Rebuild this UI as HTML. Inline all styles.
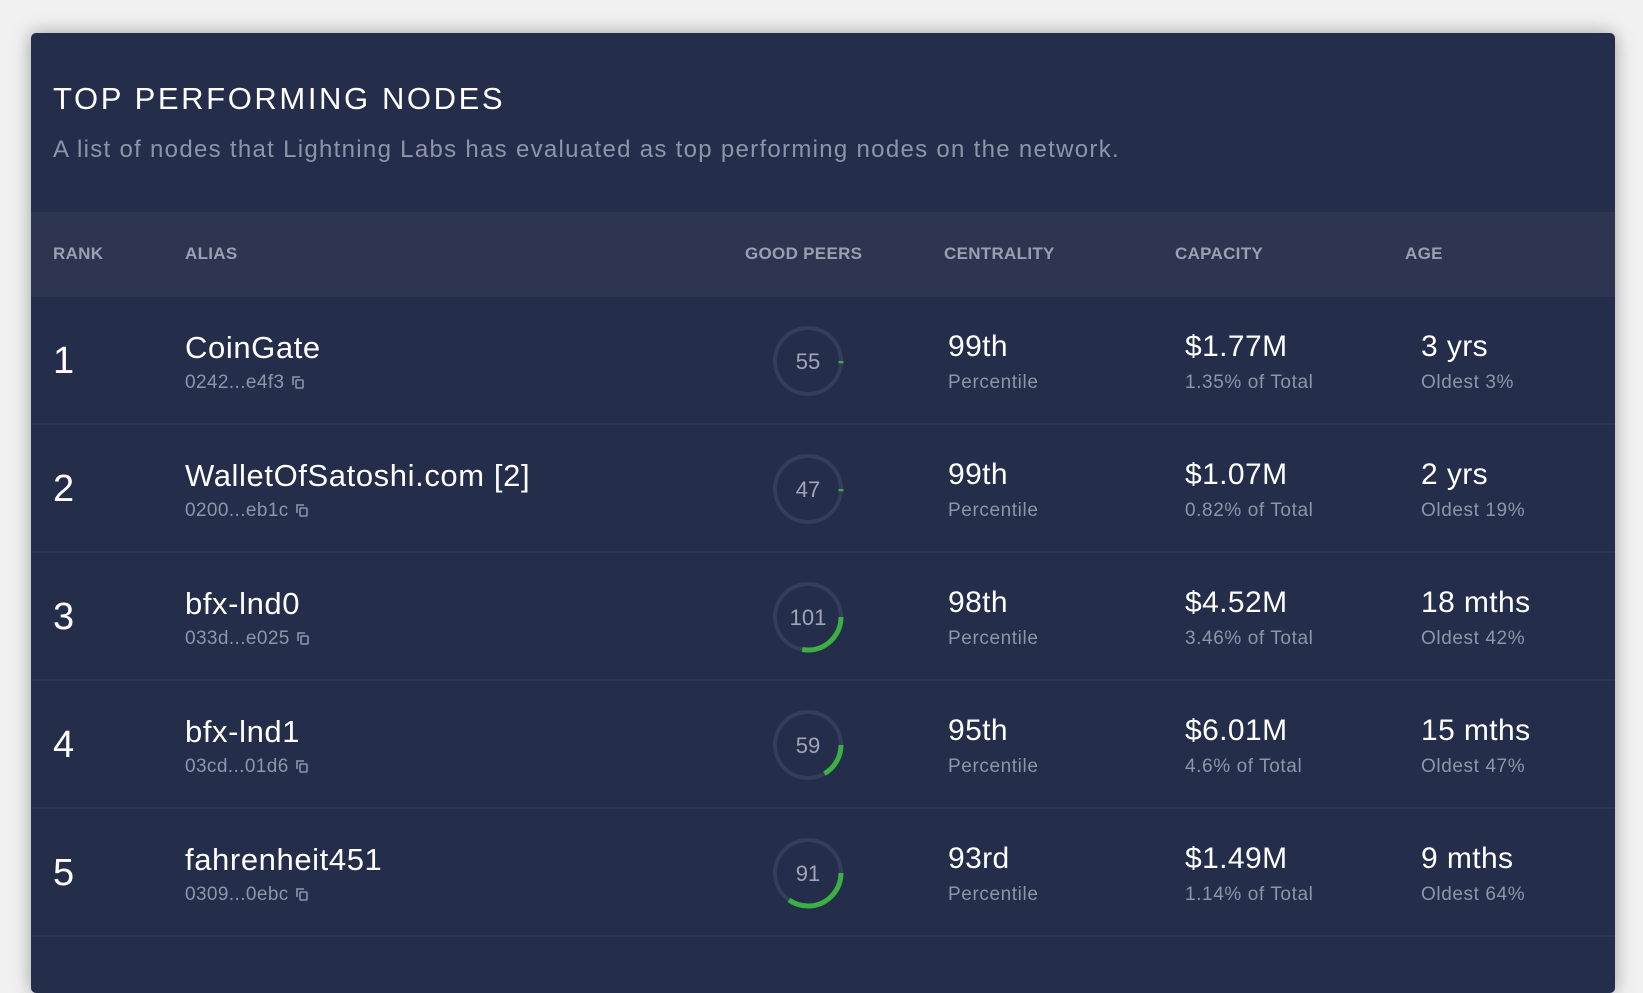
<!DOCTYPE html>
<html><head><meta charset="utf-8"><style>
*{margin:0;padding:0;box-sizing:border-box}
body{width:1643px;height:944px;background:#f1f1f1;overflow:hidden;font-family:"Liberation Sans",sans-serif;position:relative}
.card{position:absolute;left:31px;top:33px;width:1584px;height:960px;background:#242d4a;border-radius:5px;box-shadow:0 0 18px rgba(0,0,0,.35)}
.t{position:absolute;left:22px;top:48px;color:#fff;font-size:31px;letter-spacing:2.6px;white-space:nowrap}
.s{position:absolute;left:22px;top:103px;color:#8e95a9;font-size:24px;white-space:nowrap;letter-spacing:1.3px}
.hd{position:absolute;left:0;top:179px;width:100%;height:85px;background:#2d3551}
.h{position:absolute;top:32px;color:#9aa0b2;font-size:17px;font-weight:bold;white-space:nowrap;letter-spacing:0.3px}
.row{position:absolute;left:0;width:100%;height:128px;border-bottom:2px solid #2c3552}
.rk{position:absolute;left:22px;top:43px;color:#fff;font-size:38px}
.al{position:absolute;left:154px;top:33px;color:#fff;font-size:31px;white-space:nowrap;letter-spacing:0.6px}
.hs{position:absolute;left:154px;top:75px;color:#8e95a9;font-size:19px;white-space:nowrap;letter-spacing:0.4px}
.big{position:absolute;top:33px;color:#fff;font-size:30px;white-space:nowrap;letter-spacing:0.4px}
.sm{position:absolute;top:75px;color:#8e95a9;font-size:19px;white-space:nowrap;letter-spacing:0.6px}
svg.g{position:absolute;left:739px;top:26px}
</style></head><body>
<div class="card">
<div class="t">TOP PERFORMING NODES</div>
<div class="s">A list of nodes that Lightning Labs has evaluated as top performing nodes on the network.</div>
<div class="hd">
<div class="h" style="left:22px">RANK</div>
<div class="h" style="left:154px">ALIAS</div>
<div class="h" style="left:714px">GOOD PEERS</div>
<div class="h" style="left:913px">CENTRALITY</div>
<div class="h" style="left:1144px">CAPACITY</div>
<div class="h" style="left:1374px">AGE</div>
</div>
<div id="rows"></div>
</div>
<script>
var d=[["1","CoinGate","0242...e4f3","55",4,"99th","$1.77M","1.35% of Total","3 yrs","Oldest 3%"],
["2","WalletOfSatoshi.com [2]","0200...eb1c","47",4,"99th","$1.07M","0.82% of Total","2 yrs","Oldest 19%"],
["3","bfx-lnd0","033d...e025","101",100,"98th","$4.52M","3.46% of Total","18 mths","Oldest 42%"],
["4","bfx-lnd1","03cd...01d6","59",60,"95th","$6.01M","4.6% of Total","15 mths","Oldest 47%"],
["5","fahrenheit451","0309...0ebc","91",125,"93rd","$1.49M","1.14% of Total","9 mths","Oldest 64%"]];
var h="";var C=2*Math.PI*33;
d.forEach(function(r,i){
var L=C*r[4]/360;
h+='<div class="row" style="top:'+(264+i*128)+'px"><div class="rk">'+r[0]+'</div><div class="al">'+r[1]+'</div><div class="hs">'+r[2]+' <svg width="16" height="17" viewBox="0 0 16 17" style="vertical-align:-3px"><path d="M3 11V3h7" fill="none" stroke="#8e95a9" stroke-width="1.6"/><rect x="6" y="6" width="7" height="8" rx="1" fill="none" stroke="#8e95a9" stroke-width="1.6"/></svg></div>'
+'<svg class="g" width="76" height="76"><circle cx="38" cy="38" r="33" fill="none" stroke="#353d59" stroke-width="4"/><circle cx="38" cy="38" r="33" fill="none" stroke="#3cb043" stroke-width="5" stroke-dasharray="'+L+' 999"/><text x="38" y="46" text-anchor="middle" fill="#a0a6b8" font-size="22" font-family="Liberation Sans">'+r[3]+'</text></svg>'
+'<div class="big" style="left:917px">'+r[5]+'</div><div class="sm" style="left:917px">Percentile</div>'
+'<div class="big" style="left:1154px">'+r[6]+'</div><div class="sm" style="left:1154px">'+r[7]+'</div>'
+'<div class="big" style="left:1390px">'+r[8]+'</div><div class="sm" style="left:1390px">'+r[9]+'</div></div>';});
document.getElementById("rows").innerHTML=h;
</script>
</body></html>
